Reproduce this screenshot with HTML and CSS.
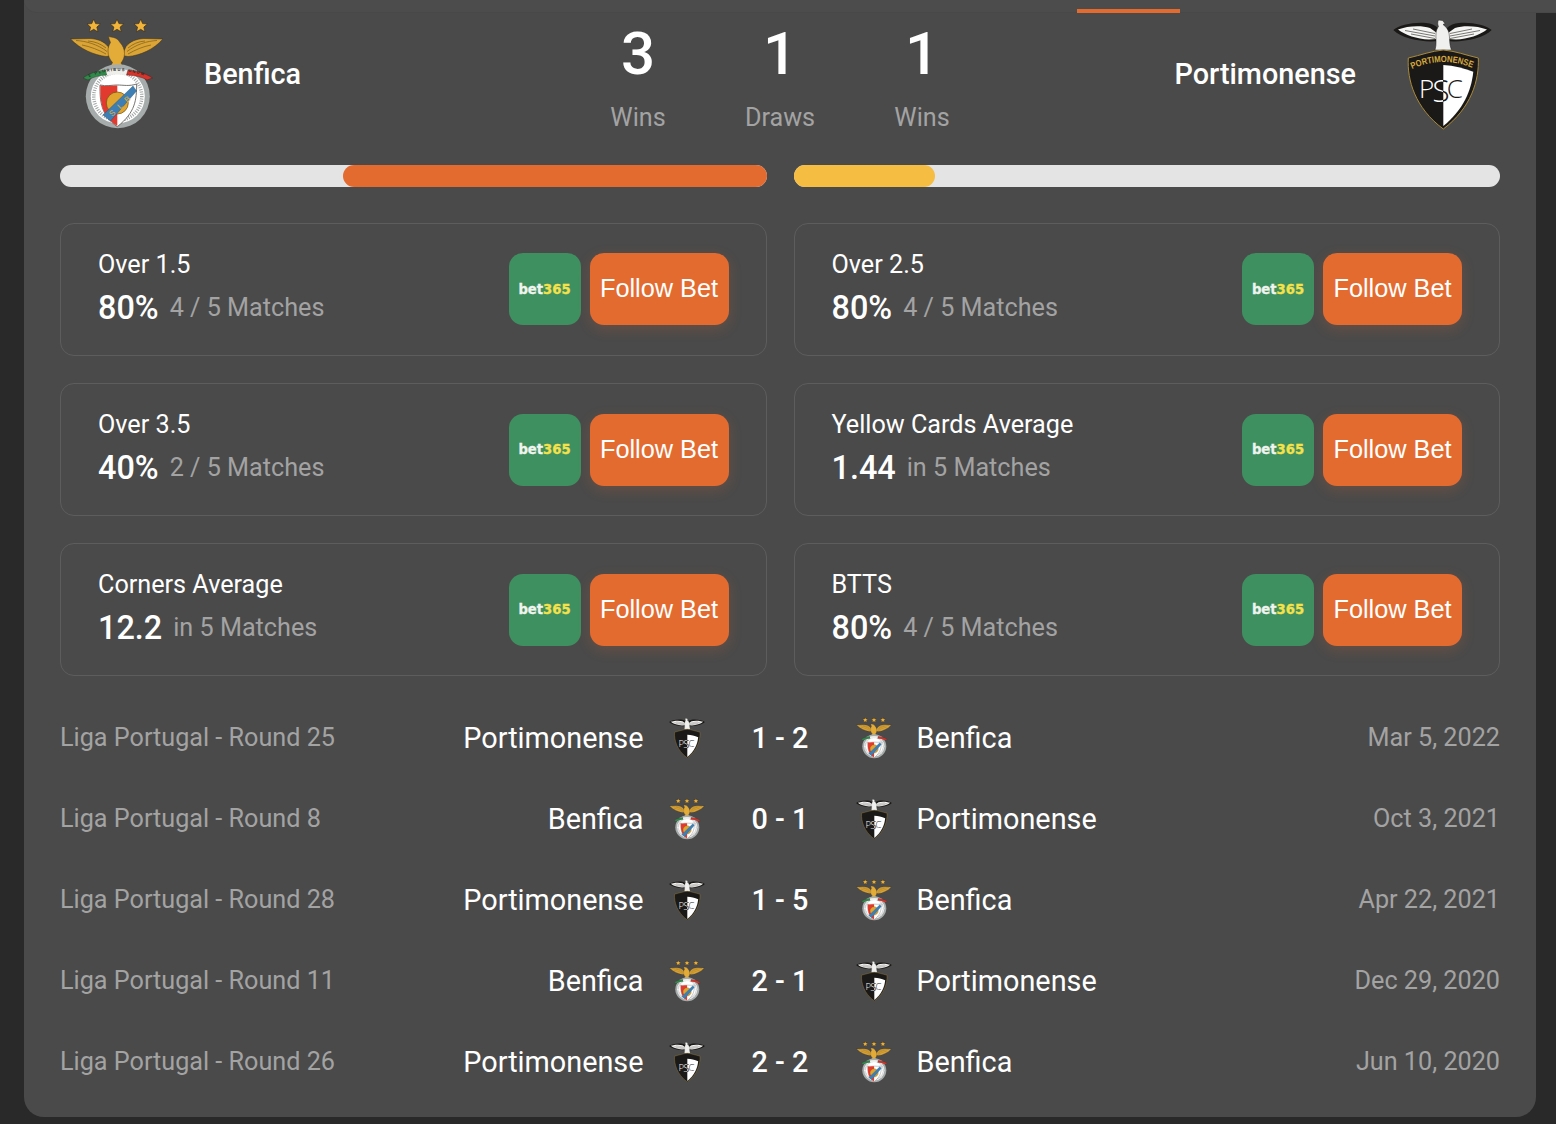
FILE: index.html
```html
<!DOCTYPE html>
<html lang="en">
<head>
  <meta charset="UTF-8">
  <meta name="viewport" content="width=device-width, initial-scale=1.0">
  <title>Benfica vs Portimonense</title>
  <link rel="stylesheet" href="styles.css">
</head>
<body>

  <!-- Crest artwork, reused below. Lettering stays on each crest. -->
  <svg class="sprites" width="0" height="0">
    <defs>
      <linearGradient id="psc-s" gradientUnits="userSpaceOnUse" x1="0" y1="0" x2="100" y2="0">
        <stop offset="0.5" stop-color="#fff"/>
        <stop offset="0.5" stop-color="#1c1a18"/>
      </linearGradient>
      <path id="psc-arc" d="M19 51 Q50 37 82 51"/>
      <path id="slb-arc" d="M19 59 Q47 47 78 59"/>
    </defs>

    <symbol id="benfica" viewBox="0 0 94 112">
      <g fill="#f2b53a" stroke="#33291a" stroke-width=".6">
        <path d="M23.7 1.200l1.900 4.400 4.800.4-3.600 3.100 1.100 4.700-4.200-2.500-4.200 2.500 1.100-4.700-3.600-3.100 4.800-.4z"/>
        <path d="M47 1.200l1.900 4.400 4.800.4-3.600 3.100 1.100 4.700-4.200-2.500-4.200 2.500 1.100-4.700-3.600-3.100 4.800-.4z"/>
        <path d="M70.700 1.200l1.900 4.400 4.800.4-3.600 3.100 1.100 4.700-4.200-2.500-4.200 2.500 1.100-4.700-3.600-3.100 4.800-.4z"/>
      </g>
      <path fill="#dba536" stroke="#3a2f18" stroke-width=".5" d="M.6 21L20 20.500c8 .5 14 3 18 8l4 9-6 1C24 37 10 31 .6 21zM92.800 21L74 20.500c-8 .5-14 3-18 8l-4 9 6 1c12-1 26-7 34.800-17.500z"/>
      <path fill="none" stroke="#7a5c1c" stroke-width=".7" d="M6 22.500c10 .5 22 4 31 11M12 27c8 1.500 17 5 24 9M18 23c7 .5 13 3 18 7M87 22.500c-10 .5-21 4-30 11M81 27c-8 1.500-16 5-23 9M75 23c-7 .5-12 3-17 7"/>
      <path fill="#e3ab38" stroke="#4a3a18" stroke-width=".5" d="M38.500 18.500l5 1c3 .5 5 2.500 6.500 5 3 3 4.500 7 4.500 11 0 4-1.500 7-3.500 9.500l2.500 4.500H40l2.500-5c-3-3-4.500-7-4.500-11.500 0-3.500 1-6 2.500-8.500-1-2-1.500-4-2-6z"/>
      <circle cx="47.800" cy="78.300" r="32" fill="#a5acab"/>
      <circle cx="47.800" cy="78.300" r="27" fill="#fff"/>
      <circle cx="47.800" cy="78.300" r="24" fill="none" stroke="#a3a7a8" stroke-width="3.500" stroke-dasharray="1 1.300"/>
      <path fill="#2f8a4a" stroke="#22331f" stroke-width=".4" d="M13 60c7-5 14-7 23-8l1 5c-8 .5-14 2-19 5z"/>
      <path fill="#eeeeea" d="M36 52c8-1 14-1 22 0l-1 5c-7-.8-13-.8-20 0z"/>
      <path fill="#d8332a" stroke="#3a1a18" stroke-width=".4" d="M58 52c9 1 17 3 24.500 8l-5.500 2c-5-3-12-4.500-20.500-5z"/>
      <path d="M30 67c6 1.500 12 0 17.300 0 6 0 12 1.500 19.400-1-.3 16-1 28-19.400 42.700C31 97 29.800 84 30 67z" fill="#fff" stroke="#55504c" stroke-width=".8"/>
      <path d="M30.400 67.400c6 1.300 11.500 0 16.900 0V108C31 97 30.200 84 30.400 67.400z" fill="#e23a2e"/>
      <circle cx="47.300" cy="85" r="11" fill="#e0a52e" stroke="#6d4f17" stroke-width=".7"/>
      <path d="M33 97l30-29 3.500 5-26 30z" fill="#3d7fb5" stroke="#274b66" stroke-width=".4"/>
    </symbol>

    <symbol id="portimonense" viewBox="0 0 99 112">
      <path fill="#1b1917" d="M.3 12C6 7 20 4 33 5c5 .5 9 2 12 5l1 13-8 .5C24 23 8 20 .3 12zM98.700 12C93 7 79 4 66 5c-5 .5-9 2-12 5l-1 13 8 .5c14-.5 30-3.500 37.700-11.500z"/>
      <path fill="#f5f5f3" d="M5 11.500C14 8 28 7 37 10l7 5v6l-8 .5C24 21 12 17 5 11.500zM94 11.500C85 8 71 7 62 10l-7 5v6l8 .5c12-.5 24-4.500 31-10z"/>
      <path fill="none" stroke="#24211f" stroke-width=".6" d="M12 12.500l30 5.500M20 11l22 4.500M18 16l24 4.500M87 12.500L57 18M79 11l-22 4.500M81 16l-24 4.500"/>
      <path fill="#f0f0ee" stroke="#23211f" stroke-width=".5" d="M45.500 2l4 .5 2.500 3-2 1c3 2 5 5 6 8.500 1 5 0 11 2.500 17H42c2-6 .5-12 1-17 .3-3 1.500-5 2.500-6.500-1-2-1-4.500 0-6.500z"/>
      <path d="M15.300 40c13-3 23-7 35-8 12 1 22 5 35 8 1 22-7 50-35 71C22 90 14 62 15.300 40z" fill="#1b1917" stroke="#a98a3a" stroke-width="1"/>
      <path d="M50.300 47c11 .8 20 3 30 6.700-2 19-10 38-30 54.300z" fill="#fff"/>
    </symbol>
  </svg>

  <div class="panel">
    <div class="tabs"><span class="tab-active"></span></div>

    <!-- Team summary -->
    <div class="summary">
      <div class="team">
        <svg class="crest-big benfica-big" viewBox="0 0 94 112">
          <use href="#benfica" width="94" height="112"/>
          <text class="crest-motto"><textPath href="#slb-arc" textLength="56">E PLURIBUS UNUM</textPath></text>
          <text class="crest-slb" x="34" y="92" transform="rotate(-42 47 85)" textLength="26">S L B</text>
        </svg>
        <span class="team-name">Benfica</span>
      </div>
      <div class="totals">
        <div class="total"><span class="total-num">3</span><span class="total-label">Wins</span></div>
        <div class="total"><span class="total-num">1</span><span class="total-label">Draws</span></div>
        <div class="total"><span class="total-num">1</span><span class="total-label">Wins</span></div>
      </div>
      <div class="team team-away">
        <span class="team-name">Portimonense</span>
        <svg class="crest-big portimonense-big" viewBox="0 0 99 112">
          <use href="#portimonense" width="99" height="112"/>
          <text class="crest-name"><textPath href="#psc-arc" textLength="62" lengthAdjust="spacingAndGlyphs">PORTIMONENSE</textPath></text>
          <text class="crest-psc" x="26" y="80"><tspan fill="#fff">P</tspan><tspan class="psc-s" dx="-2" dy="4" fill="url(#psc-s)">S</tspan><tspan dx="-3" dy="-4" fill="#1c1a18">C</tspan></text>
        </svg>
      </div>
    </div>

    <!-- Win bars -->
    <div class="bars">
      <div class="bar bar-home"><span class="bar-fill fill-orange" style="width: 60%"></span></div>
      <div class="bar"><span class="bar-fill fill-yellow" style="width: 20%"></span></div>
    </div>

    <!-- Bet cards -->
    <div class="cards">
      <div class="card">
        <div class="card-text">
          <div class="card-title">Over 1.5</div>
          <div class="card-stat"><strong>80%</strong><span>4 / 5 Matches</span></div>
        </div>
        <div class="bookie"><span>bet</span><em>365</em></div>
        <button class="follow">Follow Bet</button>
      </div>
      <div class="card">
        <div class="card-text">
          <div class="card-title">Over 2.5</div>
          <div class="card-stat"><strong>80%</strong><span>4 / 5 Matches</span></div>
        </div>
        <div class="bookie"><span>bet</span><em>365</em></div>
        <button class="follow">Follow Bet</button>
      </div>
      <div class="card">
        <div class="card-text">
          <div class="card-title">Over 3.5</div>
          <div class="card-stat"><strong>40%</strong><span>2 / 5 Matches</span></div>
        </div>
        <div class="bookie"><span>bet</span><em>365</em></div>
        <button class="follow">Follow Bet</button>
      </div>
      <div class="card">
        <div class="card-text">
          <div class="card-title">Yellow Cards Average</div>
          <div class="card-stat"><strong>1.44</strong><span>in 5 Matches</span></div>
        </div>
        <div class="bookie"><span>bet</span><em>365</em></div>
        <button class="follow">Follow Bet</button>
      </div>
      <div class="card">
        <div class="card-text">
          <div class="card-title">Corners Average</div>
          <div class="card-stat"><strong>12.2</strong><span>in 5 Matches</span></div>
        </div>
        <div class="bookie"><span>bet</span><em>365</em></div>
        <button class="follow">Follow Bet</button>
      </div>
      <div class="card">
        <div class="card-text">
          <div class="card-title">BTTS</div>
          <div class="card-stat"><strong>80%</strong><span>4 / 5 Matches</span></div>
        </div>
        <div class="bookie"><span>bet</span><em>365</em></div>
        <button class="follow">Follow Bet</button>
      </div>
    </div>

    <!-- Head to head -->
    <div class="matches">
      <div class="match">
        <div class="match-side"><span class="league">Liga Portugal - Round 25</span><span class="club">Portimonense</span></div>
        <svg class="crest-small" viewBox="0 0 99 112"><use href="#portimonense" width="99" height="112"/><text class="crest-psc" x="26" y="80"><tspan fill="#fff">P</tspan><tspan class="psc-s" dx="-2" dy="4" fill="url(#psc-s)">S</tspan><tspan dx="-3" dy="-4" fill="#1c1a18">C</tspan></text></svg>
        <span class="score">1 - 2</span>
        <svg class="crest-small" viewBox="0 0 94 112"><use href="#benfica" width="94" height="112"/></svg>
        <div class="match-side"><span class="club">Benfica</span><span class="date">Mar 5, 2022</span></div>
      </div>
      <div class="match">
        <div class="match-side"><span class="league">Liga Portugal - Round 8</span><span class="club">Benfica</span></div>
        <svg class="crest-small" viewBox="0 0 94 112"><use href="#benfica" width="94" height="112"/></svg>
        <span class="score">0 - 1</span>
        <svg class="crest-small" viewBox="0 0 99 112"><use href="#portimonense" width="99" height="112"/><text class="crest-psc" x="26" y="80"><tspan fill="#fff">P</tspan><tspan class="psc-s" dx="-2" dy="4" fill="url(#psc-s)">S</tspan><tspan dx="-3" dy="-4" fill="#1c1a18">C</tspan></text></svg>
        <div class="match-side"><span class="club">Portimonense</span><span class="date">Oct 3, 2021</span></div>
      </div>
      <div class="match">
        <div class="match-side"><span class="league">Liga Portugal - Round 28</span><span class="club">Portimonense</span></div>
        <svg class="crest-small" viewBox="0 0 99 112"><use href="#portimonense" width="99" height="112"/><text class="crest-psc" x="26" y="80"><tspan fill="#fff">P</tspan><tspan class="psc-s" dx="-2" dy="4" fill="url(#psc-s)">S</tspan><tspan dx="-3" dy="-4" fill="#1c1a18">C</tspan></text></svg>
        <span class="score">1 - 5</span>
        <svg class="crest-small" viewBox="0 0 94 112"><use href="#benfica" width="94" height="112"/></svg>
        <div class="match-side"><span class="club">Benfica</span><span class="date">Apr 22, 2021</span></div>
      </div>
      <div class="match">
        <div class="match-side"><span class="league">Liga Portugal - Round 11</span><span class="club">Benfica</span></div>
        <svg class="crest-small" viewBox="0 0 94 112"><use href="#benfica" width="94" height="112"/></svg>
        <span class="score">2 - 1</span>
        <svg class="crest-small" viewBox="0 0 99 112"><use href="#portimonense" width="99" height="112"/><text class="crest-psc" x="26" y="80"><tspan fill="#fff">P</tspan><tspan class="psc-s" dx="-2" dy="4" fill="url(#psc-s)">S</tspan><tspan dx="-3" dy="-4" fill="#1c1a18">C</tspan></text></svg>
        <div class="match-side"><span class="club">Portimonense</span><span class="date">Dec 29, 2020</span></div>
      </div>
      <div class="match">
        <div class="match-side"><span class="league">Liga Portugal - Round 26</span><span class="club">Portimonense</span></div>
        <svg class="crest-small" viewBox="0 0 99 112"><use href="#portimonense" width="99" height="112"/><text class="crest-psc" x="26" y="80"><tspan fill="#fff">P</tspan><tspan class="psc-s" dx="-2" dy="4" fill="url(#psc-s)">S</tspan><tspan dx="-3" dy="-4" fill="#1c1a18">C</tspan></text></svg>
        <span class="score">2 - 2</span>
        <svg class="crest-small" viewBox="0 0 94 112"><use href="#benfica" width="94" height="112"/></svg>
        <div class="match-side"><span class="club">Benfica</span><span class="date">Jun 10, 2020</span></div>
      </div>
    </div>
  </div>

</body>
</html>
```

FILE: styles.css
```css
/* General Styles */
html,
body {
  height: 100%;
  overflow: hidden;
}

body {
  margin: 0;
  padding: 0 20px 7px 24px;
  box-sizing: border-box;
  background-color: #292929;
  color: #ffffff;
  font-family: Roboto, "Liberation Sans", sans-serif;
}

.sprites {
  display: block;
  height: 0;
}

/* Main Panel */
.panel {
  height: 100%;
  background: #4a4a4a;
  border-radius: 0 0 20px 20px;
  padding: 0 36px 15px;
  box-sizing: border-box;
}

/* Top Tabs */
.tabs {
  display: flex;
  justify-content: flex-end;
  height: 13px;
  margin: 0 -56px 0 -36px;
  padding-right: 376px;
  background: #4c4c4c;
  border-bottom-left-radius: 20px;
  border-bottom: 1px solid #484848;
  box-sizing: border-box;
}

.tab-active {
  width: 103px;
  height: 4px;
  margin-top: 9px;
  margin-bottom: -1px;
  background: #e36b30;
}

/* Team Summary */
.summary {
  display: grid;
  grid-template-columns: 1fr 426px 1fr;
  height: 152px;
}

.team {
  display: flex;
  align-items: flex-start;
  gap: 40px;
  padding: 5px 0 0 10px;
}

.team-away {
  justify-content: flex-end;
  gap: 37px;
  padding: 5px 8px 0 0;
}

.team-name {
  margin-top: 37px;
  font-size: 28.8px;
  font-weight: 500;
  line-height: 38px;
}

.crest-big {
  flex: none;
  height: 112px;
}

.benfica-big {
  width: 94px;
}

.portimonense-big {
  width: 99px;
}

.totals {
  display: grid;
  grid-template-columns: repeat(3, 142px);
}

.total {
  display: flex;
  flex-direction: column;
  align-items: center;
  padding-top: 6px;
}

.total-num {
  font-size: 60px;
  font-weight: 500;
  line-height: 70px;
}

.total-label {
  margin-top: 14px;
  font-size: 25.2px;
  line-height: 30px;
  color: #a3a3a3;
}

/* Win Bars */
.bars {
  display: grid;
  grid-template-columns: 1fr 1fr;
  gap: 27px;
}

.bar {
  display: flex;
  height: 22px;
  background: #e4e4e4;
  border-radius: 11px;
}

.bar-home {
  justify-content: flex-end;
}

.bar-fill {
  border-radius: 11px;
}

.fill-orange {
  background: #e36b30;
}

.fill-yellow {
  background: #f5bd41;
}

/* Bet Cards */
.cards {
  display: grid;
  grid-template-columns: 1fr 1fr;
  column-gap: 27px;
  row-gap: 27.4px;
  margin-top: 35.7px;
}

.card {
  display: flex;
  align-items: center;
  height: 133px;
  padding: 0 37px;
  border: 1px solid #5d5d5d;
  border-radius: 14px;
  box-sizing: border-box;
}

.card-text {
  flex: 1;
  padding-bottom: 2px;
}

.card-title {
  font-size: 25.2px;
  line-height: 30px;
}

.card-stat {
  display: flex;
  align-items: center;
  gap: 11px;
  margin-top: 9px;
  font-size: 25.2px;
  line-height: 38px;
  color: #a3a3a3;
}

.card-stat strong {
  font-size: 32.4px;
  font-weight: 500;
  color: #ffffff;
}

.bookie {
  display: flex;
  align-items: center;
  justify-content: center;
  width: 72px;
  height: 72px;
  margin-right: 9px;
  background: #3f9060;
  border-radius: 14px;
  font-family: "DejaVu Sans", sans-serif;
  font-size: 13.2px;
  font-weight: 700;
  color: #f0f3ee;
  -webkit-text-stroke: 0.3px currentColor;
}

.bookie em {
  font-style: normal;
  color: #f5e14a;
}

.follow {
  width: 139px;
  height: 72px;
  padding: 0 0 1px;
  background: #e36b30;
  border: none;
  border-radius: 14px;
  box-shadow: 0 4px 14px rgba(229, 107, 47, 0.2);
  color: #ffffff;
  font-family: "Liberation Sans", Arial, sans-serif;
  font-size: 25.3px;
}

/* Head To Head */
.matches {
  margin-top: 20.8px;
}

.match {
  display: grid;
  grid-template-columns: 1fr 36px 101px 36px 1fr;
  column-gap: 25px;
  align-items: center;
  height: 81px;
}

.score {
  text-align: center;
  font-size: 28.8px;
  font-weight: 500;
}

.match-side {
  display: flex;
  justify-content: space-between;
  align-items: center;
}

.club {
  font-size: 28.8px;
}

.league,
.date {
  margin-bottom: 1px;
  font-size: 25.2px;
  color: #a3a3a3;
}

.crest-small {
  width: 36px;
  height: 42px;
}

/* Crest Lettering */
.crest-name {
  font-family: "Liberation Sans", sans-serif;
  font-size: 9px;
  font-weight: 700;
  fill: #d8aa3c;
}

.crest-motto {
  font-family: "Liberation Sans", sans-serif;
  font-size: 4px;
  font-weight: 700;
  fill: #2a2a26;
}

.crest-psc {
  font-family: "Open Sans", sans-serif;
  font-size: 26px;
  font-weight: 300;
}

.psc-s {
  font-size: 32px;
}

.crest-slb {
  font-family: "Liberation Sans", sans-serif;
  font-size: 8px;
  fill: #e0b040;
}
```
